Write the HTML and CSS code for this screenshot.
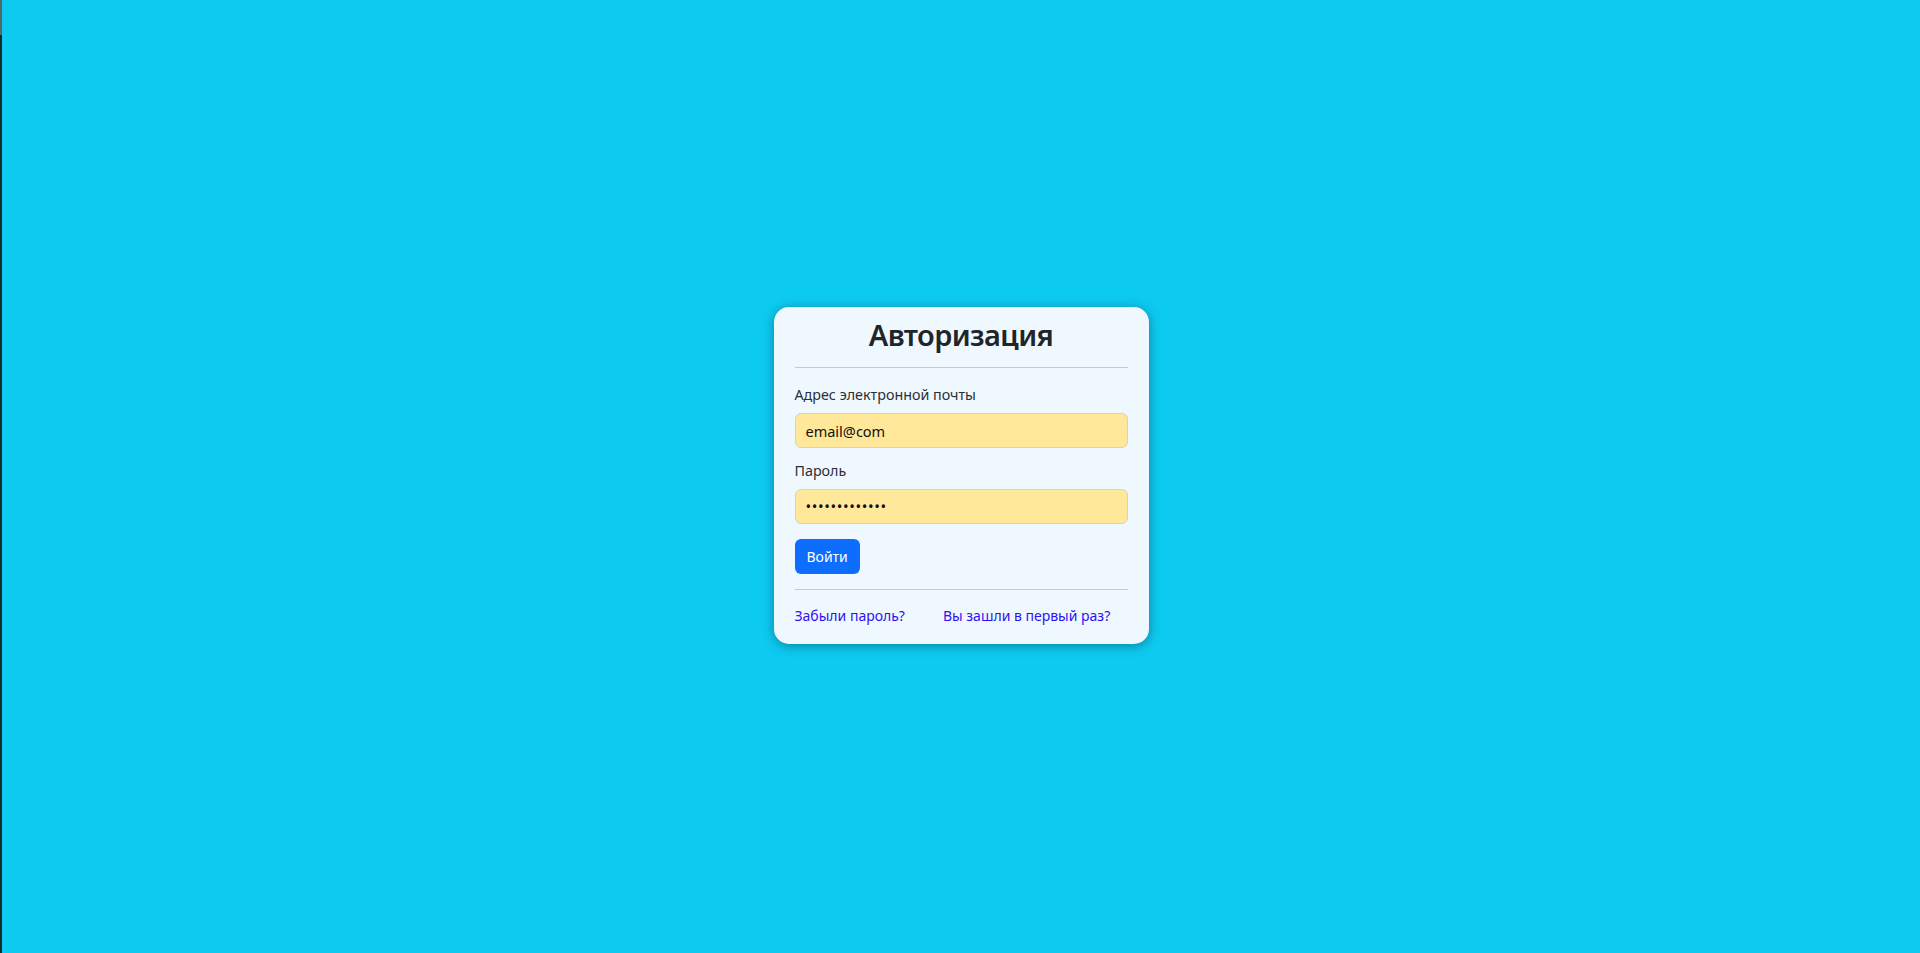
FILE: index.html
```html
<!DOCTYPE html>
<html lang="ru">
<head>
<meta charset="utf-8">
<title>Авторизация</title>
<link rel="stylesheet" href="styles.css">
</head>
<body>
<div class="edge"><div class="edge-top"></div></div>
<main class="stage">
  <form class="card">
    <h2 class="title">Авторизация</h2>
    <hr class="sep">
    <label class="label" for="email">Адрес электронной почты</label>
    <input class="field" id="email" type="text" value="email@com">
    <label class="label" for="pass">Пароль</label>
    <input class="field field-pass" id="pass" type="password" value="1234567890123">
    <button class="btn" type="button">Войти</button>
    <hr class="sep sep-bottom">
    <div class="links">
      <a class="link" href="#">Забыли пароль?</a>
      <a class="link" href="#">Вы зашли в первый раз?</a>
    </div>
  </form>
</main>
</body>
</html>
```
FILE: styles.css
```css
* { box-sizing: border-box; }
html, body { height: 100%; }
body {
  margin: 0;
  display: flex;
  background: #0dcaf0;
  font-family: "Noto Sans", "Open Sans", sans-serif;
  color: #212529;
}
.edge {
  width: 2px;
  flex: none;
  background: #1b2a30;
}
.edge-top {
  height: 35px;
  background: #55656b;
}
.stage {
  flex: 1;
  display: flex;
  align-items: center;
  justify-content: center;
}
.card {
  width: 375px;
  margin-bottom: 2px;
  padding: 10px 21px 18px;
  background: #f0f8ff;
  border-radius: 15px;
  box-shadow: 0 2px 12px rgba(0, 0, 0, 0.35);
  display: flex;
  flex-direction: column;
  align-items: stretch;
}
.title {
  margin: 0;
  text-align: center;
  font-size: 29px;
  line-height: 36px;
  letter-spacing: -0.6px;
  font-weight: 600;
  color: #212529;
}
.sep {
  margin: 14px 0 16px;
  border: 0;
  border-top: 1px solid #c4cad2;
  height: 0;
}
.label {
  font-size: 14.3px;
  line-height: 21px;
  margin-bottom: 8px;
  color: #2b2f33;
}
.field {
  display: block;
  width: 100%;
  height: 35px;
  padding: 6px 10px;
  font-family: inherit;
  font-size: 14.5px;
  line-height: 21px;
  color: #111;
  background: #ffe899;
  border: 1px solid #d3d3c8;
  border-radius: 6px;
  margin: 0 0 11.5px;
  outline: none;
}
.field-pass {
  margin-bottom: 15px;
  font-size: 15px;
  letter-spacing: 0.6px;
}
.btn {
  align-self: flex-start;
  height: 35px;
  padding: 0 12px;
  font-family: inherit;
  font-size: 14px;
  color: #fff;
  background: #0d6efd;
  border: 0;
  border-radius: 6px;
}
.sep-bottom { margin: 15.5px 0 15px; }
.links {
  display: flex;
  gap: 38px;
  font-size: 14px;
  line-height: 21px;
}
.link {
  color: #2e12f5;
  text-decoration: none;
}
```
